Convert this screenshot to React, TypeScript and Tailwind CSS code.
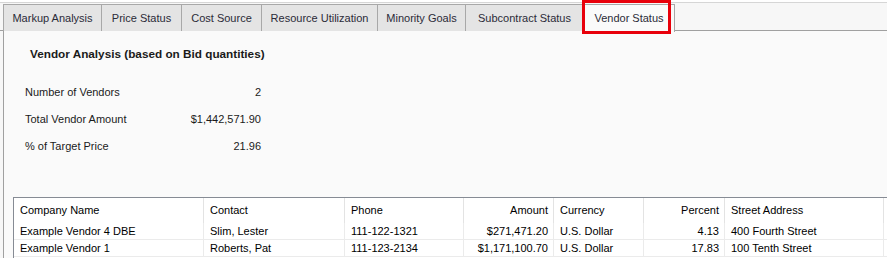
const tabs = [
  {label: "Markup Analysis", w: "w-[99px]"},
  {label: "Price Status", w: "w-[81px]"},
  {label: "Cost Source", w: "w-[81px]"},
  {label: "Resource Utilization", w: "w-[117px]"},
  {label: "Minority Goals", w: "w-[89px]"},
  {label: "Subcontract Status", w: "w-[119px]"},
]

const summary = [
  ["Number of Vendors", "2"],
  ["Total Vendor Amount", "$1,442,571.90"],
  ["% of Target Price", "21.96"],
]

const columns = [
  {label: "Company Name", right: false},
  {label: "Contact", right: false},
  {label: "Phone", right: false},
  {label: "Amount", right: true},
  {label: "Currency", right: false},
  {label: "Percent", right: true},
  {label: "Street Address", right: false},
]

const vendors = [
  ["Example Vendor 4 DBE", "Slim, Lester", "111-122-1321", "$271,471.20", "U.S. Dollar", "4.13", "400 Fourth Street"],
  ["Example Vendor 1", "Roberts, Pat", "111-123-2134", "$1,171,100.70", "U.S. Dollar", "17.83", "100 Tenth Street"],
]

function App() {
  return (
    <div className="w-[887px] h-[258px] overflow-hidden bg-white text-[11px] text-[#1b1b1b] font-['Liberation_Sans',Arial,sans-serif]">
      <div className="mt-[2px] border-t border-[#d6d6d6] bg-[#f7f7f7] h-[256px] flex flex-col">
        {/* tab strip */}
        <div className="relative flex pl-[3px] pt-px h-[28px] border-b border-[#a0a0a0]">
          {tabs.map((t, i) => (
            <div key={t.label}
                 className={`${t.w} h-[27px] ${i > 0 ? "-ml-px" : ""} flex items-center justify-center border border-[#a8a8a8] border-b-0 bg-[#e4e4e4] text-[#2b2b38]`}>
              {t.label}
            </div>
          ))}
          <div className="-ml-px w-[92px] h-[28px] -mb-px flex items-center justify-center border border-[#a8a8a8] border-b-0 bg-[#fafafa] text-[#2b2b38]">
            Vendor Status
          </div>
          <div className="absolute left-[582px] top-[-3px] w-[89px] h-[34px] border-[3px] border-[#e8000b]"/>
        </div>

        {/* panel */}
        <div className="flex-1 ml-[3px] border-l border-[#a0a0a0] bg-[#fafafa] flex flex-col">
          <div className="pl-[26px] pt-[16px] h-[30px] font-bold text-[11.75px] leading-[14px] text-[#1a1a1a]">
            Vendor Analysis (based on Bid quantities)
          </div>
          <div className="mt-[18px] pl-[21px] w-[257px]">
            {summary.map(([k, v]) => (
              <div key={k} className="h-[27px] flex items-center justify-between">
                <span>{k}</span>
                <span>{v}</span>
              </div>
            ))}
          </div>

          <div className="mt-[37px] ml-[9px] flex-1 border-t border-l border-[#868b94] bg-white text-black">
            <div className="grid grid-cols-[190px_141px_119px_90px_90px_81px_159px] h-[25px]">
              {columns.map((c) => (
                <div key={c.label}
                     className={`flex items-center h-[25px] border-r border-[#e3e3e3] ${c.right ? "justify-end pr-[5px]" : "pl-[6px]"}`}>
                  {c.label}
                </div>
              ))}
            </div>
            {vendors.map((row) => (
              <div key={row[0]} className="grid grid-cols-[190px_141px_119px_90px_90px_81px_159px] h-[17px] border-b border-[#ebebeb]">
                {row.map((cell, j) => (
                  <div key={j}
                       className={`flex items-center border-r border-[#ebebeb] ${columns[j].right ? "justify-end pr-[5px]" : "pl-[6px]"}`}>
                    {cell}
                  </div>
                ))}
              </div>
            ))}
          </div>
        </div>
      </div>
    </div>
  )
}

export default App
